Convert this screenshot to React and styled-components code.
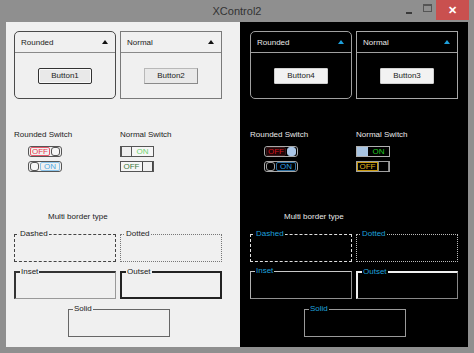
import React from 'react'
import styled, { createGlobalStyle, ThemeProvider } from 'styled-components'

const GlobalStyle = createGlobalStyle`
  html, body {
    margin: 0;
    padding: 0;
    background: #8f8f8f;
    font-family: "Liberation Sans", Arial, sans-serif;
  }
`

const lightTheme = {
  bg: '#f0f0f0',
  text: '#222',
  legend: '#222',
  pad: 8,
  width: 234,
  groupRounded: '#4a4a4a',
  groupNormal: '#7a7a7a',
  headLine: '#8a8a8a',
  arrow: '#111',
  borders: {
    dashed: '1px dashed #444',
    dotted: '1px dotted #777',
    inset: { top: '2px solid #333', left: '2px solid #333', right: '1px solid #999', bottom: '1px solid #999' },
    outset: '2px solid #222',
    solid: '1px solid #666',
  },
}

const darkTheme = {
  bg: '#000',
  text: '#e8e8e8',
  legend: '#1ea0dc',
  pad: 10,
  width: 228,
  groupRounded: '#a0a0a0',
  groupNormal: '#a8a8a8',
  headLine: '#a0a0a0',
  arrow: '#1ea0dc',
  borders: {
    dashed: '1px dashed #e0e0e0',
    dotted: '1px dotted #bbb',
    inset: { top: '1px solid #c8c8c8', left: '1px solid #b0b0b0', right: '1px solid #909090', bottom: '1px solid #909090' },
    outset: { top: '2px solid #f0f0f0', left: '2px solid #f0f0f0', right: '1px solid #888', bottom: '1px solid #888' },
    solid: '1px solid #9a9a9a',
  },
}

const Window = styled.div`
  width: 474px;
  height: 353px;
  display: flex;
  flex-direction: column;
  background: #8f8f8f;
`

const TitleBar = styled.div`
  height: 22px;
  display: grid;
  grid-template-columns: 1fr auto 1fr;
  align-items: start;
`

const Title = styled.div`
  grid-column: 2;
  font-size: 11px;
  line-height: 22px;
  color: #333;
`

const Controls = styled.div`
  grid-column: 3;
  justify-self: end;
  display: flex;
  align-items: flex-start;
  margin-right: 5px;
`

const CtrlBtn = styled.div`
  width: 18px;
  height: 20px;
  display: flex;
  align-items: center;
  justify-content: center;
`

const MinIcon = styled.div`
  width: 6px;
  height: 2px;
  margin-top: 6px;
  background: #3a3a3a;
`

const MaxIcon = styled.div`
  width: 7px;
  height: 5px;
  margin-top: -4px;
  border: 1px solid #555;
  border-top-width: 2px;
`

const CloseBtn = styled.div`
  width: 33px;
  height: 20px;
  background: #c9504f;
  color: #fff;
  font-size: 11px;
  font-weight: bold;
  display: flex;
  align-items: center;
  justify-content: center;
`

const Client = styled.div`
  display: flex;
  margin: 0 6px;
  height: 325px;
`

const Panel = styled.div`
  width: ${({ theme }) => theme.width}px;
  background: ${({ theme }) => theme.bg};
  color: ${({ theme }) => theme.text};
  padding: 9px 0 0 ${({ theme }) => theme.pad}px;
  box-sizing: border-box;
  font-size: 8px;
`

const GroupRow = styled.div`
  display: grid;
  grid-template-columns: 102px 102px;
  gap: 4px;
`

const GroupBox = styled.div`
  height: 68px;
  box-sizing: border-box;
  display: flex;
  flex-direction: column;
  border: 1px solid ${({ theme, $rounded }) => ($rounded ? theme.groupRounded : theme.groupNormal)};
  border-radius: ${({ $rounded }) => ($rounded ? '5px' : '0')};
`

const GroupHead = styled.div`
  height: 20px;
  flex: none;
  display: flex;
  align-items: center;
  justify-content: space-between;
  padding: 0 7px 0 6px;
  border-bottom: 1px solid ${({ theme }) => theme.headLine};
`

const Arrow = styled.div`
  width: 0;
  height: 0;
  border-left: 3px solid transparent;
  border-right: 3px solid transparent;
  border-bottom: 4px solid ${({ theme }) => theme.arrow};
`

const GroupBody = styled.div`
  flex: 1;
  display: flex;
  align-items: center;
  justify-content: center;
`

const Button = styled.div`
  width: 54px;
  height: 16px;
  box-sizing: border-box;
  display: flex;
  align-items: center;
  justify-content: center;
  color: #222;
  font-size: 8px;
  background: ${({ $variant }) => ($variant === 'dark' ? '#f2f2f2' : '#e9e9e9')};
  ${({ $variant }) =>
    $variant === 'rounded'
      ? 'border: 1px solid #333; box-shadow: inset 0 0 0 1px #fafafa; border-radius: 2px;'
      : $variant === 'normal'
      ? 'border: 1px solid #b8b8b8; border-right-color: #8a8a8a; border-bottom-color: #8a8a8a;'
      : 'border: 1px solid #cfcfcf; border-radius: 1px;'}
`

const SwitchRow = styled.div`
  margin-top: 31px;
  display: grid;
  grid-template-columns: 106px auto;
`

const SwitchCol = styled.div`
  display: flex;
  flex-direction: column;
`

const Label = styled.div`
  line-height: 10px;
  white-space: nowrap;
`

const SwitchStack = styled.div`
  margin-top: 6px;
  margin-left: ${({ $indent }) => $indent}px;
  display: flex;
  flex-direction: column;
  gap: 4px;
`

const SwitchFrame = styled.div`
  width: 34px;
  height: 11px;
  box-sizing: border-box;
  display: flex;
  flex-direction: ${({ $on }) => ($on ? 'row-reverse' : 'row')};
  border: 1px solid ${({ $c }) => $c.frame};
  border-radius: ${({ $rounded }) => ($rounded ? '3px' : '0')};
  padding: ${({ $rounded }) => ($rounded ? '0 1px' : '0')};
  gap: ${({ $rounded }) => ($rounded ? '1px' : '0')};
`

const SwitchText = styled.div`
  flex: 1;
  display: flex;
  align-items: center;
  justify-content: center;
  font-size: 8px;
  line-height: 8px;
  color: ${({ $c }) => $c.text};
  background: ${({ $c }) => $c.segBg || 'transparent'};
  border: ${({ $c }) => ($c.segBorder ? `1px solid ${$c.segBorder}` : 'none')};
  border-radius: ${({ $rounded }) => ($rounded ? '2px' : '0')};
`

const Knob = styled.div`
  width: ${({ $rounded }) => ($rounded ? 9 : 11)}px;
  flex: none;
  box-sizing: border-box;
  background: ${({ $c }) => $c.knobBg};
  border: 1px solid ${({ $c }) => $c.knobBorder};
  border-radius: ${({ $rounded }) => ($rounded ? '3px' : '0')};
  ${({ $rounded }) => (!$rounded ? 'border-top: none; border-bottom: none;' : '')}
`

function Switch({ rounded, on, c }) {
  return (
    <SwitchFrame $rounded={rounded} $on={on} $c={c}>
      <SwitchText $rounded={rounded} $c={c}>{on ? 'ON' : 'OFF'}</SwitchText>
      <Knob $rounded={rounded} $c={c} />
    </SwitchFrame>
  )
}

const switches = {
  light: {
    rounded: [
      { on: false, c: { frame: '#555', text: '#e8384c', segBorder: '#e8586a', knobBg: '#f6f6f6', knobBorder: '#555' } },
      { on: true, c: { frame: '#555', text: '#4aa8e6', segBorder: '#8cc4ea', knobBg: '#f6f6f6', knobBorder: '#555' } },
    ],
    normal: [
      { on: true, c: { frame: '#555', text: '#6fd36f', segBg: '#f6f6f6', knobBg: '#f0f0f0', knobBorder: '#555' } },
      { on: false, c: { frame: '#555', text: '#3c7a3c', segBg: '#f6f6f6', knobBg: '#f0f0f0', knobBorder: '#444' } },
    ],
  },
  dark: {
    rounded: [
      { on: false, c: { frame: '#a8a8a8', text: '#d0141e', segBg: '#1e0608', segBorder: '#3a1a1c', knobBg: '#aac6e6', knobBorder: '#aac6e6' } },
      { on: true, c: { frame: '#a8a8a8', text: '#2a9ee4', segBorder: '#2f6f9f', knobBg: '#000', knobBorder: '#a0a0a0' } },
    ],
    normal: [
      { on: true, c: { frame: '#b0b0b0', text: '#22cc22', knobBg: '#a8c4e2', knobBorder: '#a8c4e2' } },
      { on: false, c: { frame: '#a0a0a0', text: '#e0b41c', segBorder: '#c89a10', knobBg: '#000', knobBorder: '#888' } },
    ],
  },
}

const BorderTitle = styled.div`
  margin-top: 40px;
  margin-left: 34px;
  line-height: 10px;
`

const BorderGrid = styled.div`
  margin-top: 12px;
  display: grid;
  grid-template-columns: 102px 102px;
  grid-auto-rows: 28px;
  column-gap: 4px;
  row-gap: 9px;
`

const BorderBox = styled.div`
  position: relative;
  box-sizing: border-box;
  ${({ theme, $kind }) => {
    const b = theme.borders[$kind]
    if (typeof b === 'string') return `border: ${b};`
    return `border-top: ${b.top}; border-left: ${b.left}; border-right: ${b.right}; border-bottom: ${b.bottom};`
  }}
`

const SolidBox = styled(BorderBox)`
  width: 102px;
  height: 28px;
  margin: 10px 0 0 54px;
`

const Legend = styled.span`
  position: absolute;
  top: -6px;
  left: 4px;
  padding: 0 1px;
  line-height: 10px;
  background: ${({ theme }) => theme.bg};
  color: ${({ theme }) => theme.legend};
`

function ControlPanel({ theme, mode, buttons }) {
  const sw = switches[mode]
  return (
    <ThemeProvider theme={theme}>
      <Panel>
        <GroupRow>
          <GroupBox $rounded>
            <GroupHead>
              <span>Rounded</span>
              <Arrow />
            </GroupHead>
            <GroupBody>
              <Button $variant={mode === 'dark' ? 'dark' : 'rounded'}>{buttons[0]}</Button>
            </GroupBody>
          </GroupBox>
          <GroupBox>
            <GroupHead>
              <span>Normal</span>
              <Arrow />
            </GroupHead>
            <GroupBody>
              <Button $variant={mode === 'dark' ? 'dark' : 'normal'}>{buttons[1]}</Button>
            </GroupBody>
          </GroupBox>
        </GroupRow>

        <SwitchRow>
          <SwitchCol>
            <Label>Rounded Switch</Label>
            <SwitchStack $indent={14}>
              {sw.rounded.map((s, i) => (
                <Switch key={i} rounded on={s.on} c={s.c} />
              ))}
            </SwitchStack>
          </SwitchCol>
          <SwitchCol>
            <Label>Normal Switch</Label>
            <SwitchStack $indent={0}>
              {sw.normal.map((s, i) => (
                <Switch key={i} on={s.on} c={s.c} />
              ))}
            </SwitchStack>
          </SwitchCol>
        </SwitchRow>

        <BorderTitle>Multi border type</BorderTitle>
        <BorderGrid>
          <BorderBox $kind="dashed"><Legend>Dashed</Legend></BorderBox>
          <BorderBox $kind="dotted"><Legend>Dotted</Legend></BorderBox>
          <BorderBox $kind="inset"><Legend>Inset</Legend></BorderBox>
          <BorderBox $kind="outset"><Legend>Outset</Legend></BorderBox>
        </BorderGrid>
        <SolidBox $kind="solid"><Legend>Solid</Legend></SolidBox>
      </Panel>
    </ThemeProvider>
  )
}

export default function App() {
  return (
    <>
      <GlobalStyle />
      <Window>
        <TitleBar>
          <Title>XControl2</Title>
          <Controls>
            <CtrlBtn><MinIcon /></CtrlBtn>
            <CtrlBtn><MaxIcon /></CtrlBtn>
            <CloseBtn>✕</CloseBtn>
          </Controls>
        </TitleBar>
        <Client>
          <ControlPanel theme={lightTheme} mode="light" buttons={['Button1', 'Button2']} />
          <ControlPanel theme={darkTheme} mode="dark" buttons={['Button4', 'Button3']} />
        </Client>
      </Window>
    </>
  )
}
